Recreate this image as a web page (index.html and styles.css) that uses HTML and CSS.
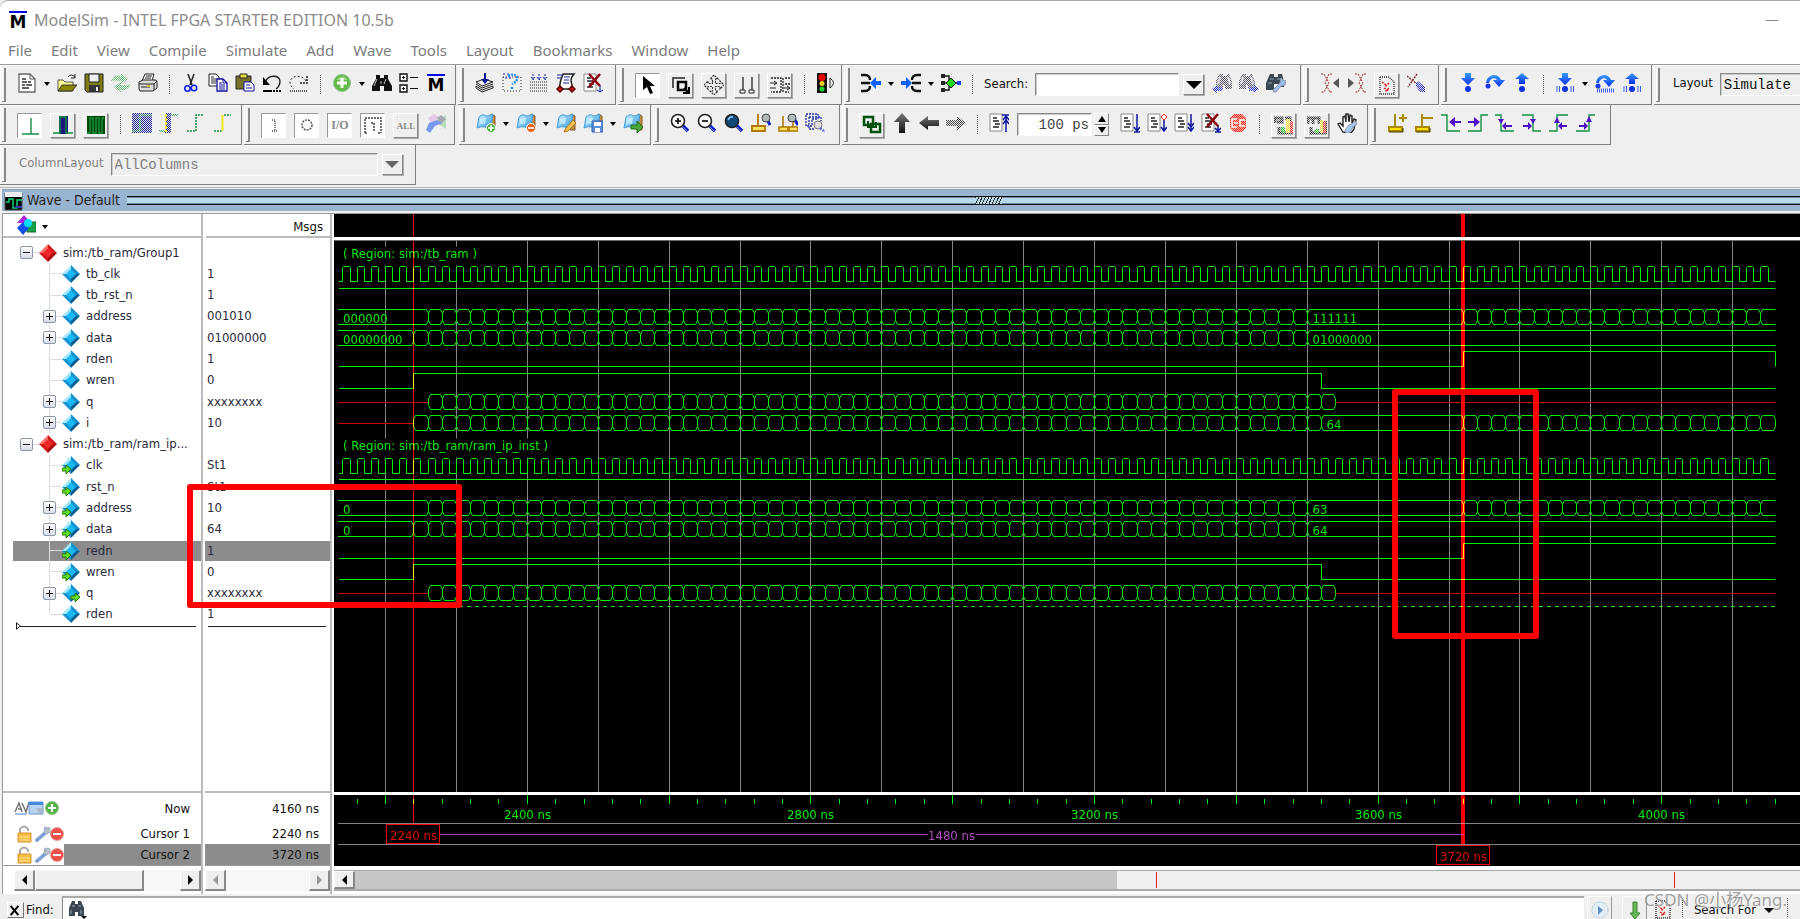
FILE: index.html
```html
<!DOCTYPE html>
<html lang="en">
<head>
<meta charset="utf-8">
<title>ModelSim - INTEL FPGA STARTER EDITION 10.5b</title>
<link rel="stylesheet" href="styles.css">
</head>
<body>
<svg class="defs" aria-hidden="true">
  <defs>
    <pattern id="dither" width="2" height="2" patternUnits="userSpaceOnUse"><rect width="1" height="1" fill="#efefef"/><rect x="1" y="1" width="1" height="1" fill="#efefef"/></pattern>
    <linearGradient id="sky" x1="0" y1="0" x2="1" y2="1"><stop offset="0" stop-color="#c8f0ff"/><stop offset=".5" stop-color="#7cc4ee"/><stop offset="1" stop-color="#3a98d8"/></linearGradient>
    <linearGradient id="dark" x1="0" y1="0" x2="0" y2="1"><stop offset="0" stop-color="#777"/><stop offset="1" stop-color="#111"/></linearGradient>
    <linearGradient id="blue" x1="0" y1="0" x2="0" y2="1"><stop offset="0" stop-color="#3a9cff"/><stop offset="1" stop-color="#0a30e8"/></linearGradient>
  </defs>
</svg>
<div class="app">
  <header class="titlebar">
    <span class="logo" data-icon="logo"></span>
    <h1>ModelSim - INTEL FPGA STARTER EDITION 10.5b</h1>
    <button class="minimize" aria-label="Minimize"></button>
  </header>
  <nav class="menubar">
    <button>File</button><button>Edit</button><button>View</button><button>Compile</button><button>Simulate</button><button>Add</button><button>Wave</button><button>Tools</button><button>Layout</button><button>Bookmarks</button><button>Window</button><button>Help</button>
  </nav>
  <div class="toolrow">
    <div class="toolbar w-file"><i class="grip"></i>
      <button class="t" data-icon="new" aria-label="New"></button><button class="dd" aria-label="New options"></button>
      <button class="t" data-icon="open" aria-label="Open"></button><button class="t" data-icon="save" aria-label="Save"></button><button class="t" data-icon="reload" aria-label="Reload"></button><button class="t" data-icon="print" aria-label="Print"></button><i class="sep"></i>
      <button class="t" data-icon="cut" aria-label="Cut"></button><button class="t" data-icon="copy" aria-label="Copy"></button><button class="t" data-icon="paste" aria-label="Paste"></button><button class="t" data-icon="undo" aria-label="Undo"></button><button class="t" data-icon="redo" aria-label="Redo"></button><i class="sep"></i>
      <button class="t" data-icon="add" aria-label="Add"></button><button class="dd" aria-label="Add options"></button><button class="t" data-icon="find" aria-label="Find"></button><button class="t" data-icon="tree" aria-label="Collapse"></button><button class="t" data-icon="logo" aria-label="ModelSim"></button>
    </div>
    <div class="toolbar w-compile"><i class="grip"></i>
      <button class="t" data-icon="compile" aria-label="Compile"></button><button class="t" data-icon="compileq" aria-label="Compile out of date"></button><button class="t" data-icon="compileall" aria-label="Compile all"></button><button class="t" data-icon="simulate" aria-label="Simulate"></button><button class="t" data-icon="break" aria-label="Break"></button>
    </div>
    <div class="toolbar w-mode"><i class="grip"></i>
      <button class="t box on" data-icon="pointer" aria-label="Select mode"></button><button class="t box" data-icon="zoommode" aria-label="Zoom mode"></button><button class="t box" data-icon="pan" aria-label="Pan mode"></button><button class="t box" data-icon="twocursor" aria-label="Two cursor mode"></button><button class="t box" data-icon="editmode" aria-label="Edit mode"></button><i class="sep"></i>
      <button class="t" data-icon="traffic" aria-label="Stop drawing"></button>
    </div>
    <div class="toolbar w-search"><i class="grip"></i>
      <button class="t" data-icon="drivers" aria-label="Drivers"></button><button class="dd" aria-label="Drivers options"></button><button class="t" data-icon="readers" aria-label="Readers"></button><button class="dd" aria-label="Readers options"></button><button class="t" data-icon="net" aria-label="Net"></button><i class="sep"></i>
      <label class="lbl" for="search">Search:</label><input id="search" class="field search" type="text"><button class="drop" aria-label="Search history"></button>
      <button class="t" data-icon="findprev" aria-label="Search backward"></button><button class="t" data-icon="findnext" aria-label="Search forward"></button><button class="t" data-icon="findopt" aria-label="Search options"></button>
    </div>
    <div class="toolbar w-x"><i class="grip"></i>
      <button class="t" data-icon="xprev" aria-label="Previous X"></button><button class="t" data-icon="xnext" aria-label="Next X"></button><button class="t box" data-icon="xdoc" aria-label="X report"></button><button class="t" data-icon="xopt" aria-label="X options"></button>
    </div>
    <div class="toolbar w-step"><i class="grip"></i>
      <button class="t" data-icon="into" aria-label="Step into"></button><button class="t" data-icon="over" aria-label="Step over"></button><button class="t" data-icon="out" aria-label="Step out"></button><i class="sep"></i>
      <button class="t" data-icon="intoc" aria-label="Step into current"></button><button class="dd" aria-label="Step options"></button><button class="t" data-icon="overc" aria-label="Step over current"></button><button class="t" data-icon="outc" aria-label="Step out current"></button>
    </div>
    <div class="toolbar w-layout"><i class="grip"></i>
      <label class="lbl" for="layout">Layout</label><input id="layout" class="field mono flat" type="text" value="Simulate">
    </div>
  </div>
  <div class="toolrow">
    <div class="toolbar w-shape"><i class="grip"></i>
      <button class="t box on" data-icon="w1" aria-label="Event"></button><button class="t box" data-icon="w2" aria-label="Pulse"></button><button class="t box" data-icon="w3" aria-label="Clock"></button><i class="sep"></i>
      <button class="t" data-icon="w4" aria-label="Region"></button><button class="t" data-icon="w5" aria-label="Edge region"></button><button class="t" data-icon="w6" aria-label="Edge"></button><button class="t" data-icon="w7" aria-label="Marked edge"></button>
    </div>
    <div class="toolbar w-io"><i class="grip"></i>
      <button class="t box on" data-icon="fi" aria-label="Inputs"></button><button class="t box on" data-icon="fo" aria-label="Outputs"></button><button class="t box on" data-icon="fio" aria-label="Inouts"></button><button class="t box on" data-icon="fint" aria-label="Internal"></button><button class="t box" data-icon="fall" aria-label="All"></button><button class="t" data-icon="fopt" aria-label="Filter options"></button>
    </div>
    <div class="toolbar w-mark"><i class="grip"></i>
      <button class="t" data-icon="bkadd" aria-label="Add bookmark"></button><button class="dd" aria-label="Add bookmark options"></button><button class="t" data-icon="bkdel" aria-label="Delete bookmark"></button><button class="dd" aria-label="Delete bookmark options"></button><button class="t" data-icon="bkedit" aria-label="Edit bookmark"></button><button class="t" data-icon="bksave" aria-label="Save bookmark"></button><button class="dd" aria-label="Save bookmark options"></button><button class="t" data-icon="bkgo" aria-label="Go to bookmark"></button>
    </div>
    <div class="toolbar w-zoom"><i class="grip"></i>
      <button class="t" data-icon="zin" aria-label="Zoom in"></button><button class="t" data-icon="zout" aria-label="Zoom out"></button><button class="t" data-icon="zfull" aria-label="Zoom full"></button><button class="t" data-icon="zcur" aria-label="Zoom on cursor"></button><button class="t" data-icon="zcurs" aria-label="Zoom between cursors"></button><button class="t" data-icon="zsel" aria-label="Zoom other window"></button>
    </div>
    <div class="toolbar w-run"><i class="grip"></i>
      <button class="t box" data-icon="link" aria-label="Environment"></button><button class="t" data-icon="up" aria-label="Up"></button><button class="t" data-icon="back" aria-label="Back"></button><button class="t" data-icon="fwd" aria-label="Forward"></button><i class="sep"></i>
      <button class="t" data-icon="restart" aria-label="Restart"></button>
      <span class="spin"><input class="field mono" type="text" value="100 ps" aria-label="Run length"><span class="spinbtns"><button class="su" aria-label="Increase"></button><button class="sd" aria-label="Decrease"></button></span></span>
      <button class="t" data-icon="run" aria-label="Run"></button><button class="t" data-icon="cont" aria-label="Continue run"></button><button class="t" data-icon="runall" aria-label="Run all"></button><button class="t" data-icon="brk" aria-label="Break run"></button><button class="t" data-icon="stop" aria-label="Stop"></button><i class="sep"></i>
      <button class="t box" data-icon="perf" aria-label="Performance profiling"></button><button class="t box" data-icon="mem" aria-label="Memory profiling"></button><button class="t" data-icon="hand" aria-label="Profile options"></button>
    </div>
    <div class="toolbar w-cursor"><i class="grip"></i>
      <button class="t" data-icon="cadd" aria-label="Insert cursor"></button><button class="t" data-icon="cdel" aria-label="Delete cursor"></button><button class="t" data-icon="e1" aria-label="Previous transition"></button><button class="t" data-icon="e2" aria-label="Next transition"></button><button class="t" data-icon="e3" aria-label="Previous falling edge"></button><button class="t" data-icon="e4" aria-label="Next falling edge"></button><button class="t" data-icon="e5" aria-label="Previous rising edge"></button><button class="t" data-icon="e6" aria-label="Next rising edge"></button>
    </div>
  </div>
  <div class="toolrow">
    <div class="toolbar w-cols"><i class="grip"></i>
      <label class="lbl off" for="cols">ColumnLayout</label><input id="cols" class="field mono flat off" type="text" value="AllColumns"><button class="drop off" aria-label="Choose columns"></button>
    </div>
  </div>

  <main class="window">
    <div class="caption"><span class="capicon" data-icon="wave"></span><h2>Wave - Default</h2><span class="rails"><i></i></span></div>
    <div class="panes">
      <section class="pane names">
        <div class="head"><button class="objects" data-icon="objects" aria-label="Objects"></button><button class="dd" aria-label="Object options"></button></div>
        <ul class="list" id="names"></ul>
        <div class="fill"><i class="endmark"></i></div>
        <div class="foot">
          <div class="now"><span class="ticons" data-icon="nowicons"></span><b>Now</b></div>
          <div><span class="ticons" data-icon="curicons"></span><b>Cursor 1</b></div>
          <div class="sel"><span class="ticons" data-icon="curicons"></span><b>Cursor 2</b></div>
        </div>
        <div class="scroll"><button class="sl" aria-label="Scroll left"></button><i class="thumb"></i><i class="trough"></i><button class="sr" aria-label="Scroll right"></button></div>
      </section>
      <section class="pane values">
        <div class="head">Msgs</div>
        <ul class="list" id="values"></ul>
        <div class="fill"><i class="endline"></i></div>
        <div class="foot"><div class="now"><b>4160 ns</b></div><div><b>2240 ns</b></div><div class="sel"><b>3720 ns</b></div></div>
        <div class="scroll dis"><button class="sl" aria-label="Scroll left"></button><i class="trough"></i><button class="sr" aria-label="Scroll right"></button></div>
      </section>
      <section class="pane waves">
        <div class="wtop"><svg id="wtop"></svg></div>
        <div class="wplot"><svg id="wplot"></svg></div>
        <div class="wruler"><svg id="wruler"></svg></div>
        <div class="scroll wide"><button class="sl" aria-label="Scroll left"></button><i class="before"></i><i class="view"><i class="m1"></i><i class="m2"></i></i></div>
      </section>
      <i class="note note-values"></i>
      <i class="note note-edge"></i>
    </div>
    <footer class="findbar">
      <button class="close" data-icon="close" aria-label="Close find bar"></button><label class="lbl" for="find">Find:</label>
      <span class="findbox"><span data-icon="findsm"></span><input id="find" type="text"></span>
      <button class="fb" data-icon="play" aria-label="Find next"></button><button class="fb second" data-icon="down" aria-label="Direction"></button><button class="fb plain" data-icon="xdoc" aria-label="Match list"></button><i class="sep"></i>
      <button class="for">Search For <i></i></button><i class="sep"></i>
      <span class="mark">CSDN @小杨Yang.</span>
    </footer>
  </main>
</div>
<script src="app.js"></script>
</body>
</html>
```
FILE: styles.css
```css
* { box-sizing: border-box; }
body { margin: 0; background: #efefef; color: #111; font: 13px "DejaVu Sans Condensed", "Noto Sans", "Noto Sans CJK SC", sans-serif; }
button { margin: 0; padding: 0; border: 0; background: none; color: inherit; font: inherit; }
input { margin: 0; outline: 0; color: inherit; font: inherit; min-width: 0; }
h1, h2, ul { margin: 0; padding: 0; font-weight: normal; list-style: none; }
i { display: block; }
svg { display: block; }
.defs { position: absolute; width: 0; height: 0; }
.app { display: flex; flex-direction: column; height: 100vh; overflow: hidden; }

.titlebar { display: flex; align-items: center; height: 37px; padding: 2px 22px 0 8px; background: #fff; border-top: 1px solid #a8a8a8; border-top-left-radius: 8px; color: #8c8c8c; }
.titlebar h1 { flex: 1; margin-left: 6px; font: 16px "Noto Sans", sans-serif; }
.logo { width: 20px; height: 20px; }
.minimize { width: 12px; height: 1px; background: #888; }
.menubar { display: flex; gap: 19px; height: 28px; padding: 0 8px 0; background: #fff; border-bottom: 1px solid #999; color: #7c7c7c; font: 15px "Noto Sans", sans-serif; }
.menubar button { height: 26px; }

.toolrow { display: flex; gap: 2px; height: 40px; }
.toolbar { display: flex; flex: none; align-items: center; height: 40px; border: solid #808080; border-width: 0 1px 1px 0; box-shadow: inset 1px 1px #fff; overflow: hidden; }
.grip { flex: none; width: 4px; height: 34px; margin: 0 7px 0 2px; border: solid #888; border-width: 0 2px 1px 0; box-shadow: inset 1px 0 #fff; }
.w-file { width: 456px; }
.w-compile { width: 158px; }
.w-mode { width: 224px; }
.w-search { width: 457px; }
.w-x { width: 136px; }
.w-step { width: 211px; }
.w-layout { flex: 1 0 148px; }
.w-shape { width: 242px; }
.w-io { width: 211px; margin-right: 2px; }
.w-mark { width: 192px; }
.w-zoom { width: 187px; }
.w-run { width: 526px; }
.w-cursor { width: 241px; }
.w-cols { width: 416px; }
.t { display: flex; flex: none; align-items: center; justify-content: center; width: 27px; height: 20px; margin-bottom: 3px; }
.t.box { width: 25px; height: 25px; margin: 1px 4px 0; border: 1px solid #fff; border-right-color: #8a8a8a; border-bottom-color: #8a8a8a; box-shadow: 1px 1px #aaa; }
.t.box.on { background: #fff; border-color: #999 #fff #fff #999; box-shadow: none; }
.dd { flex: none; width: 13px; height: 6px; display: flex; justify-content: center; }
.dd::before { content: ""; border: solid transparent; border-width: 4px 3px 0; border-top-color: #000; }
.sep { flex: none; width: 16px; height: 20px; background: repeating-linear-gradient(#555 0 1px, transparent 1px 2px) center / 1px 20px no-repeat; }
.lbl { flex: none; margin: 0 7px 2px 4px; }
.field { height: 23px; padding: 0 3px; border: 1px solid #fff; border-top-color: #888; border-left-color: #888; background: #fff; box-shadow: inset 1px 1px #ccc; }
.search { width: 144px; }
.mono { font: 14px "Liberation Mono", monospace; }
.flat { background: #efefef; }
.drop { flex: none; display: flex; justify-content: center; align-items: center; width: 21px; height: 21px; margin: 0 4px; border: 1px solid #fff; border-right-color: #888; border-bottom-color: #888; box-shadow: 1px 1px #aaa; }
.drop::before { content: ""; border: solid transparent; border-width: 8px 8px 0; border-top-color: #000; }
.drop.off::before { border-width: 7px 7px 0; border-top-color: #666; }
.off { color: #808080; }
.w-layout .lbl, .w-cols .lbl { margin-left: 6px; margin-bottom: 5px; }
.w-layout .field { flex: 1; }
.w-cols .field { width: 267px; }
.spin { display: flex; gap: 2px; width: 92px; margin: 0 7px 0 5px; }
.spin .field { width: 75px; text-align: right; color: #444; padding-right: 2px; }
.spinbtns { display: grid; width: 15px; }
.spinbtns button { display: flex; align-items: center; justify-content: center; border: 1px solid #fff; border-right-color: #888; border-bottom-color: #888; }
.su::before, .sd::before { content: ""; border: solid transparent; border-width: 0 4px 6px; border-bottom-color: #000; }
.sd::before { border-width: 6px 4px 0; border-top-color: #000; }

.window { display: flex; flex: 1; flex-direction: column; min-height: 0; margin-top: 2px; border-top: 1px solid #b4b4b4; padding: 1px 0 0 2px; }
.caption { display: flex; flex: none; align-items: center; height: 22px; padding-left: 2px; background: #99b4d1; border-top: 1px solid #8ba6c4; }
.capicon { width: 19px; height: 19px; }
.caption h2 { margin: 0 7px 2px 4px; font-size: 14px; color: #222; }
.rails { display: flex; flex: 1; justify-content: center; height: 9px; background: #b7d9ea; border: solid #111; border-width: 1px 0; box-shadow: inset 0 1px #6f8aa6, inset 0 -1px #6f8aa6; }
.rails i { width: 27px; height: 7px; margin-left: 50px; background: repeating-linear-gradient(115deg, #333 0 1px, #b7d9ea 1px 3px); }
.panes { position: relative; display: flex; flex: 1; min-height: 0; margin-top: 2px; border-left: 1px solid #999; border-top: 1px solid #999; background: #fff; }
.pane { display: flex; flex-direction: column; min-width: 0; }
.names { width: 200px; border-right: 2px solid #bbb; }
.values { width: 127px; margin-left: 2px; border-right: 2px solid #bbb; }
.waves { flex: 1; margin-left: 2px; }
.head { display: flex; flex: none; align-items: center; height: 24px; border-bottom: 2px solid #bbb; }
.values .head { justify-content: flex-end; padding: 2px 7px 0 0; margin-left: 1px; }
.names .head { padding-left: 13px; }
.objects { width: 20px; height: 20px; }
.names .dd { margin: 6px 0 0 2px; }
.list { display: grid; flex: none; grid-template-rows: repeat(18, 1fr); height: 387px; padding-top: 4px; color: #2a2a3a; }
.list li { position: relative; display: flex; align-items: center; min-height: 0; white-space: pre; line-height: 18px; }
.list .sel::before { content: ""; position: absolute; inset: 1px 0 0 10px; background: #8c8c8c; }
.values .sel::before { left: 0; }
.list li > * { position: relative; }
.names li { padding-left: 17px; }
.names li.child { padding-left: 40px; }
.names li.child::after { content: ""; position: absolute; left: 46px; top: 0; bottom: 0; width: 1px; background: #ddd; z-index: 0; }
.names li.last::after { bottom: 50%; }
.names li > * { z-index: 1; }
.exp { flex: none; display: flex; align-items: center; justify-content: center; width: 13px; height: 13px; border: 1px solid #8b97ab; border-radius: 2px; background: linear-gradient(#fff, #d8dce4); }
.exp::before { content: ""; width: 7px; height: 7px; background: linear-gradient(#111, #111) center / 7px 1px no-repeat; }
.exp.plus::before { background: linear-gradient(#111, #111) center / 7px 1px no-repeat, linear-gradient(#111, #111) center / 1px 7px no-repeat; }
.exp.none { visibility: hidden; }
.tw { flex: none; width: 6px; height: 1px; background: #ddd; }
.none + .tw { width: 12px; margin-left: -6px; }
.dia { flex: none; width: 18px; height: 18px; margin-right: 6px; }
.values li { padding-left: 2px; }
.fill { flex: 1; min-height: 0; }
.endmark { position: relative; width: 180px; height: 1px; margin: 1px 0 0 13px; background: #222; }
.endmark::before { content: ""; position: absolute; left: 0; top: -4px; border: solid transparent; border-width: 4px 0 4px 5px; border-left-color: #222; }
.endmark::after { content: ""; position: absolute; left: 1px; top: -2px; border: solid transparent; border-width: 2px 0 2px 3px; border-left-color: #fff; }
.endline { height: 1px; margin: 1px 4px 0 3px; background: #222; }
.foot { display: grid; flex: none; grid-template-rows: 30px 21px 21px; border-top: 2px solid #bbb; border-bottom: 1px solid #999; text-align: right; }
.foot div { display: flex; align-items: center; justify-content: space-between; padding: 0 11px 0 11px; }
.foot b { flex: 1; font-weight: normal; }
.foot .sel { background: linear-gradient(#8c8c8c, #8c8c8c) right / 100% 100% no-repeat; }
.names .foot .sel { background-size: 137px 100%; }
.ticons { width: 50px; height: 20px; }
.scroll { display: flex; flex: none; height: 21px; margin: 4px 0 3px; }
.names .scroll { margin-left: 11px; }
.sl, .sr { display: flex; flex: none; align-items: center; justify-content: center; width: 21px; border: 1px solid #fff; border-right: 2px solid #888; border-bottom: 2px solid #888; background: #efefef; }
.sl::before { content: ""; border: solid transparent; border-width: 5px 5px 5px 0; border-right-color: #000; }
.sr::before { content: ""; border: solid transparent; border-width: 5px 0 5px 5px; border-left-color: #000; }
.dis .sl::before { border-right-color: #999; }
.dis .sr::before { border-left-color: #999; }
.thumb { width: 109px; border: 1px solid #fff; border-right: 2px solid #888; border-bottom: 2px solid #888; background: #efefef; }
.trough { flex: 1; background: #f7f7f7; }
.wide { border: solid #aaa; border-width: 1px 0 2px; background: #c6c6c6; }
.before { flex: none; width: 52%; }
.view { display: flex; flex: 1; justify-content: space-between; padding: 1px 125px 1px 39px; background: #efefef; }
.m1, .m2 { width: 1px; background: #e02020; }
.wtop, .wplot, .wruler { overflow: hidden; background: #000; }
.wtop { flex: none; height: 23px; }
.wplot { flex: 1; min-height: 0; margin: 3px 0; border-top: 1px solid #666; }
.wruler { flex: none; height: 71px; }
.waves svg { width: 100%; height: 100%; font: 13px "DejaVu Sans Condensed", "Noto Sans", sans-serif; isolation: isolate; }
.g { fill: none; stroke: #00ee00; }
.x { fill: none; stroke: #c80000; }
.grid { stroke: #848484; }
.gt { fill: #00f000; }
.rt { fill: #e80000; }
.cur { fill: #f00; mix-blend-mode: screen; }

.note { position: absolute; border: 6px solid #f00; border-radius: 3px; z-index: 3; }
.note-values { left: 184px; top: 270px; width: 275px; height: 124px; }
.note-edge { left: 1389px; top: 175px; width: 147px; height: 250px; }

.findbar { position: relative; display: flex; flex: none; align-items: flex-start; height: 25px; padding: 2px 5px 0 5px; background: #efefef; }
.close { width: 17px; height: 16px; margin-top: 6px; border: 1px solid #fff; border-right-color: #777; border-bottom-color: #777; }
.findbar .lbl { margin: 6px 8px 0 2px; line-height: 16px; }
.findbox { display: flex; flex: 1; height: 23px; padding: 2px 0 0 4px; border-left: 1px solid #888; border-top: 2px solid #aaa; background: #fff; }
.findbox input { flex: 1; border: 0; background: none; }
.fb { width: 25px; height: 23px; margin-left: 3px; padding: 1px 2px 0; border: solid #fff; border-width: 1px 1px 0; border-right: 1px solid #999; }
.fb.second { margin-left: 10px; }
.fb.plain { border-color: transparent; }
.findbar .sep { margin-top: 2px; }
.for { display: flex; align-items: center; gap: 8px; margin: 6px 5px 0 3px; line-height: 16px; }
.for i { border: solid transparent; border-width: 5px 5px 0; border-top-color: #000; }
.mark { position: absolute; right: 13px; top: -7px; color: rgba(130, 130, 130, .75); font: 17px/26px "Noto Sans", "Noto Sans CJK SC", sans-serif; text-shadow: 1px 1px rgba(255, 255, 255, .6); }
```
FILE: app.js
```js
const flag = '<path d="M15 1l4 2v14h-5l-3-3z" fill="#c08a40" stroke="#8a5c20"/><path d="M3 4q4-4 7-1 3 0 7-2l-2 13q-3 2-6 0-4-1-8 1z" fill="url(#sky)" stroke="#48a0dc"/><path d="M4 6q3-3 6-1l-1 6q-3-1-6 1z" fill="#d4f4ff" opacity=".7"/>';
const lens = (inner, fill = '#fff') => `<path d="M12 12l6 6" stroke="#1020d0" stroke-width="3.500"/><path d="M12 13l5 5" stroke="#88a" stroke-width="1"/><circle cx="8" cy="8" r="6.500" fill="${fill}" stroke="#222" stroke-width="1.6"/>${inner}`;
const page = '<path d="M1 1h12v17H1z" fill="#fff" stroke="#888"/><path d="M4 5h4M4 8h6M6 11h5M4 14h6" stroke="#222" stroke-width="1.5"/>';
const bino = (c) => `<path d="M4 2h4v3h4V2h4v4l4 7v5h-8v-5H8v5H0v-5l4-7z" fill="${c}"/><path d="M5 6l-3 7M14 6l-2 5M9 8v3" stroke="#bbb"/>`;
const layers = '<path d="M1 13l6 4 11-4v2L7 19l-6-4zM1 9l6 4 11-4M1 11l6 4 11-4M1 9l8-3 9 3" fill="none" stroke="#222"/>';
const X = '<path d="M6 1l11 12M17 1L6 14" stroke="#8c0010" stroke-width="2.5"/>';
const stand = (x) => `<path d="M${x + 4} 3v11M${x} 14h9v4h-9z" fill="#ffe060" stroke="#b07800" stroke-width="1.6"/>`;
const down = '<path d="M7 0h6v5h4l-7 7-7-7h4z" fill="url(#blue)"/>';
const upA = '<path d="M7 11h6V6h4l-7-6-7 6h4z" fill="url(#blue)"/>';
const over = '<path d="M1 10C2 1 13-1 16 7h4l-6 7-6-7h4C10 4 5 5 4 10z" fill="url(#blue)"/><circle cx="3" cy="13" r="2.5" fill="#1838e0"/>';
const ticks = '<path d="M2 13v6M4.500 13v6M16 13v6M18.500 13v6" stroke="#4060f0"/>';
const dot = '<circle cx="10" cy="16" r="3" fill="#1030e0"/>';
const frame = (p) => `<path d="${p}" fill="none" stroke="#189048" stroke-width="1.4"/>`;
const va = (p) => `<path d="${p}" fill="#5010c8"/>`;
const txt = (s, x, size) => `<text x="${x}" y="14" text-anchor="middle" font-family="Liberation Serif" font-weight="bold" font-size="${size}" fill="#888">${s}</text>`;

const icons = {
  logo: '<path d="M1 1h18v2H1z" fill="#0000f0"/><text x="10" y="18" text-anchor="middle" font-family="DejaVu Sans" font-weight="bold" font-size="17" fill="#000">M</text>',
  new: '<path d="M2 1h11l5 5v13H2z" fill="#fff" stroke="#666" stroke-width="1.3"/><path d="M13 1v5h5" fill="none" stroke="#555"/><path d="M5 6h4M5 9h5M11 9h3M5 12h3M9 12h6M5 15h7" stroke="#333" stroke-width="1.3"/>',
  open: '<path d="M1 7h5l2 2h8v9H1z" fill="#ffff90" stroke="#555"/><path d="M1 18l4-6h15l-5 6z" fill="#8a8400" stroke="#333"/><path d="M11 4q3-4 7 0M18 1v4h-4" fill="none" stroke="#222"/>',
  save: '<path d="M1 1h18v18H3l-2-2z" fill="#807c10" stroke="#222"/><path d="M5 1h10v8H5z" fill="#eee" stroke="#222"/><path d="M5 12h11v7H5z" fill="#333"/><path d="M12 14h2v4h-2z" fill="#fff"/>',
  reload: '<path d="M0 8q4-7 10-5V0l7 6-7 5V8Q5 7 0 8zM20 11q-3 7-10 6v3l-7-6 7-5v3q6 1 10-1z" fill="#68b878"/><rect width="20" height="20" fill="url(#dither)"/>',
  print: '<path d="M7 1h9l-2 7H4z" fill="#fff" stroke="#222"/><path d="M1 9l4-2h13l1 2v6l-4 3H2l-1-2z" fill="#ddd" stroke="#222"/><path d="M1 11h15l3-3M16 11v6M8 3h6M7 5h6M3 14h9" fill="none" stroke="#222"/><path d="M9 13h3" stroke="#d0c020" stroke-width="2"/>',
  cut: '<path d="M7 1l4 11M13 1L9 12" stroke="#222" stroke-width="1.5"/><circle cx="6.500" cy="15.500" r="2.700" fill="none" stroke="#1020f0" stroke-width="1.6"/><circle cx="13" cy="15" r="2.700" fill="none" stroke="#1020f0" stroke-width="1.6"/>',
  copy: '<path d="M1 1h7l3 3v9H1z" fill="#fff" stroke="#222"/><path d="M3 4h3M3 6h6M3 8h6M3 10h5" stroke="#333"/><path d="M9 6h6l4 4v8H9z" fill="#fff" stroke="#1010a0" stroke-width="1.3"/><path d="M15 6v4h4M11 10h3M11 12h6M11 14h6M11 16h6" fill="none" stroke="#1010a0"/>',
  paste: '<path d="M1 3h15v13H1z" fill="#76702a" stroke="#222"/><path d="M5 1h7v4H5z" fill="#e8e040" stroke="#222"/><path d="M9 9h7l3 3v6H9z" fill="#fff" stroke="#1010a0"/><path d="M11 12h4M11 15h6" stroke="#1010a0"/>',
  undo: '<path d="M3 9C7 1 17 2 18 8q0 5-4 8" fill="none" stroke="#222" stroke-width="1.4"/><path d="M1 4v8h7z" fill="#000"/><path d="M1 18h9" stroke="#000" stroke-width="2"/><path d="M11 18h8" stroke="#000" stroke-width="2" stroke-dasharray="2 1"/>',
  redo: '<path d="M17 8C13 1 2 2 1 9q0 4 4 7" fill="none" stroke="#222" stroke-dasharray="2 2"/><path d="M18 3v7h-7" fill="none" stroke="#222" stroke-width="1.5" stroke-dasharray="2 1"/><path d="M1 18h18" stroke="#222" stroke-width="1.5" stroke-dasharray="1 1"/>',
  add: '<circle cx="10" cy="10" r="8.500" fill="#62b848" stroke="#8bc888"/><path d="M4 7q6-7 12 0z" fill="#9cda84"/><path d="M10 5v10M5 10h10" stroke="#fff" stroke-width="3"/>',
  find: bino('#111'),
  tree: '<path d="M1 1h7v7H1zM1 12h7v7H1z" fill="#fff" stroke="#111" stroke-width="1.4"/><path d="M3 4.500h3M4.500 3v3M3 15.500h3M4.500 14v3M11 4.500h8M11 15.500h8" stroke="#111"/>',
  compile: layers + '<path d="M9 0h2v6h3l-4 5-4-5h3z" fill="#101898"/>',
  compileq: '<path d="M1 4h18v14H1z" fill="none" stroke="#222" stroke-dasharray="1 2"/><path d="M1 1h8M3 5h8" stroke="#1020a0" stroke-dasharray="2 2"/><path d="M6 3q6-3 9 1 1 4-5 7M10 14v2" fill="none" stroke="#2090f0" stroke-width="2.500" stroke-dasharray="2 1"/>',
  compileall: '<path d="M1 9h18M1 12h18M1 15h18M1 18h18" stroke="#222" stroke-dasharray="1 1"/><path d="M4 1v5M10 1v5M16 1v5M2 4l2 3 2-3M8 4l2 3 2-3M14 4l2 3 2-3" fill="none" stroke="#1020a0" stroke-dasharray="2 1"/>',
  simulate: '<path d="M7 1h11q-3 3-3 7l2 8H3q1-8 4-15z" fill="#fff" stroke="#222" stroke-width="1.5"/><path d="M1 2h5M1 5h4M8 4h6M8 7h5M7 10h6" stroke="#1828a0"/><path d="M4 13l3 3-3 3-3-3zM16 13l3 3-3 3-3-3z" fill="#c81020" stroke="#600" stroke-width="1.500"/>',
  break: page + '<path d="M17 12v7M14 17l3 2 3-2" stroke="#1020a0" fill="none"/>' + X,
  pointer: '<path d="M5 1v14l4-3 3 7 3-1-3-7h5z" fill="#000"/>',
  zoommode: '<path d="M2 13V3h12" fill="none" stroke="#555" stroke-width="2"/><path d="M7 7h8v8H7z" fill="none" stroke="#000" stroke-width="2.500"/><path d="M13 13l5 5M18 12v6h-6" stroke="#000" stroke-width="2" fill="none"/>',
  pan: '<path d="M8.500 7V4H6l4-4 4 4h-2.500v4.500H16V6l4 4-4 4v-2.500h-4.500V16H14l-4 4-4-4h2.500v-4.500H4V14l-4-4 4-4v2.500h4.500z" stroke="#333" fill="none" stroke-width="1.200" stroke-dasharray="2 1"/>',
  twocursor: '<path d="M6 2v14M15 2v14" stroke="#333" stroke-width="1.4"/><path d="M3 15h5v3H3zM12 15h5v3h-5z" fill="#fff" stroke="#222"/>',
  editmode: '<path d="M1 3h10v14H1M13 3v14M15 3h5M15 17h4M15 9h5" stroke="#222" stroke-width="1.3" stroke-dasharray="2 1" fill="none"/><path d="M0 8h6M0 13h6M4 6l3 2-3 2M14 13h5M17 11l3 2-3 2" fill="none" stroke="#222"/>',
  traffic: '<path d="M1 0h10v20H1z" fill="#111"/><circle cx="6" cy="4.500" r="3.500" fill="#f00000"/><circle cx="6" cy="10.500" r="2.500" fill="#f0d020"/><circle cx="6" cy="16" r="2.500" fill="#20d030"/><path d="M14 5q7 5 0 10z" fill="#fff" stroke="#222"/>',
  drivers: '<path d="M0 2h4q5 0 5 5M0 10h9M0 18h4q5 0 5-5" fill="none" stroke="#111" stroke-width="2.400"/><path d="M9 10l6-6v4h5v4h-5v4z" fill="#1060ff"/>',
  readers: '<path d="M20 2h-4q-5 0-5 5M20 10h-9M20 18h-4q-5 0-5-5" fill="none" stroke="#111" stroke-width="2.400"/><path d="M11 10L5 4v4H0v4h5v4z" fill="#1060ff"/>',
  net: '<path d="M2 3h6v14H2M1 10h9M10 10h7" fill="none" stroke="#111" stroke-width="1.400"/><path d="M0 1h4v4H0zM0 8h4v4H0zM0 15h4v4H0z" fill="#222"/><path d="M10 5l5 5-5 5-5-5z" fill="#20d818" stroke="#111"/><path d="M16 8h4v4h-4z" fill="#1840ff"/>',
  findprev: '<path d="M7 1h4v2h4V1h2l3 8v7h-7v-4h-2v4H4V8z" fill="#556"/><path d="M8 4l-2 7M16 4l2 7" stroke="#ccd" stroke-width="2"/><path d="M0 16l5-4v2h5v4H5v2z" fill="#2030e8"/><rect width="20" height="20" fill="url(#dither)"/>',
  findnext: '<path d="M3 1h4v2h4V1h2l3 8v7H9v-4H7v4H0V8z" fill="#556"/><path d="M4 4l-2 7M12 4l2 7" stroke="#ccd" stroke-width="2"/><path d="M20 16l-5-4v2h-5v4h5v2z" fill="#2030e8"/><rect width="20" height="20" fill="url(#dither)"/>',
  findopt: '<path d="M4 1h4v3h4V1h4l2 8v5h-6v-3H8v6H0v-7z" fill="#3a4854"/><path d="M4 6h4M11 6h4M2 10h4" stroke="#90a0b0"/><path d="M7 17l7-7 1-5 3 3 2-1-1 5-4 1-5 6q-3 1-3-2z" fill="#90bcf0" stroke="#99a"/>',
  xprev: '<path d="M1 1h3l5 9-5 9H1M12 1H9M12 19H9M9 1L5 10l5 9" fill="none" stroke="#a03030" stroke-dasharray="2 1"/><path d="M19 5v10l-6-5z" fill="#555"/>',
  xnext: '<path d="M8 1h3l5 9-5 9H8M19 1h-3M19 19h-3M16 1l-4 9 5 9" fill="none" stroke="#a03030" stroke-dasharray="2 1"/><path d="M1 5v10l6-5z" fill="#555"/>',
  xdoc: '<path d="M3 2h9l5 5v12H3z" fill="none" stroke="#333" stroke-width="1.4" stroke-dasharray="1 1"/><path d="M5 7l4 3M12 8l-4 4M7 13l5 3M12 13l-4 4" stroke="#e02020" stroke-width="1.400" stroke-dasharray="2 1"/>',
  xopt: '<path d="M0 3l15 12M10 1L1 14" stroke="#803030" stroke-dasharray="2 1" stroke-width="1.500"/><path d="M9 10q3-3 4 0l5 4v5h-5l-4-6z" fill="#2028c0"/><rect x="8" y="8" width="12" height="12" fill="url(#dither)"/>',
  into: down + dot, over, out: upA + dot,
  intoc: down + dot + ticks, overc: over + '<path d="M2 17.500h17" stroke="#4060f0" stroke-width="4" stroke-dasharray="1 1"/>', outc: upA + dot + ticks,
  w1: frame('M2 19h17M11 3v16'),
  w2: '<path d="M6 1h9v18H6z" fill="#181878"/>' + frame('M0 18h7V2h6v16h7'),
  w3: '<path d="M1 1h18v18H1z" fill="#004800"/>' + frame('M1 18h3V3h3v15h3V3h3v15h3V3h2'),
  w4: '<path d="M0 0h20v20H0z" fill="#181c90"/>' + frame('M0 18h8V2h12') + '<rect width="20" height="20" fill="url(#dither)"/>',
  w5: '<path d="M6 0h6v20H6z" fill="#181c90"/>' + frame('M0 18h6M12 2h7') + '<rect width="20" height="20" fill="url(#dither)"/><path d="M7 1v18" stroke="#f8f030" stroke-width="2" stroke-dasharray="3 1"/>',
  w6: '<path d="M1 18h9V2h8" fill="none" stroke="#189048" stroke-width="1.600" stroke-dasharray="2 1"/>',
  w7: '<path d="M1 18h9M11 2h7" stroke="#189048" stroke-width="1.600" stroke-dasharray="2 1"/><path d="M9.500 2v16" stroke="#f0e820" stroke-width="2"/>',
  fi: '<path d="M8 5h3v11M8 16h6" stroke="#555" stroke-dasharray="1 1" fill="none" stroke-width="1.500"/>',
  fo: '<circle cx="10" cy="10" r="5" fill="none" stroke="#555" stroke-width="1.5" stroke-dasharray="2 1"/>',
  fio: txt('I/O', 10, 12),
  fint: '<path d="M2 18V3h16v15M2 18h3M15 18h3M8 8h3v9" fill="none" stroke="#444" stroke-width="1.500" stroke-dasharray="2 1"/>',
  fall: txt('ALL', 10, 9),
  fopt: '<path d="M2 5l6-4 5 3-7 7z" fill="#e8c8e8"/><path d="M9 9l11-7v14z" fill="#b8dcc0"/><path d="M11 5l4-3 5 4-6 6z" fill="#a8a8b0"/><path d="M0 17l3-7 8-3 5 3-7 3-5 7z" fill="#7898f0"/>',
  bkadd: flag + '<circle cx="15" cy="15" r="4.500" fill="#4cae3c" stroke="#fff"/><path d="M15 12v6M12 15h6" stroke="#fff" stroke-width="1.600"/>',
  bkdel: flag + '<circle cx="15" cy="15" r="4.500" fill="#f06018" stroke="#fff"/><path d="M12 15h6" stroke="#fff" stroke-width="1.600"/>',
  bkedit: flag + '<path d="M8 19l2-4 7-8 3 3-8 8z" fill="#f0c050" stroke="#a87820"/>',
  bksave: flag + '<path d="M9 8h11v11H9z" fill="#5a90e0" stroke="#3860a8"/><path d="M11 9h7v4h-7zM12 15h5v4h-5z" fill="#fff"/>',
  bkgo: flag + '<path d="M8 12h6V8l6 6-6 6v-4H8z" fill="#48a838" stroke="#287020"/>',
  zin: lens('<path d="M5 8h6M8 5v6" stroke="#000" stroke-width="1.600"/>'),
  zout: lens('<path d="M5 8h6" stroke="#000" stroke-width="1.600"/>'),
  zfull: lens('<path d="M4 7q2-4 5-3" stroke="#9cf" fill="none" stroke-width="1.500"/>', '#104878'),
  zcur: '<path d="M7 1v12M1 13h13v5H1z" fill="#ffe060" stroke="#b07800" stroke-width="1.800"/><path d="M17 8l2 4" stroke="#1020d0" stroke-width="3"/><circle cx="15" cy="5" r="4" fill="#b0b8b8" stroke="#444"/>',
  zcurs: stand(1) + stand(11) + '<path d="M17 7l3 5" stroke="#1020d0" stroke-width="3"/><circle cx="14" cy="5" r="4" fill="#b0b8b8" stroke="#444"/>',
  zsel: '<path d="M1 1h12v5H7v7H1zM4 4h12v4M4 4v12h5" fill="none" stroke="#2030a0" stroke-width="1.300" stroke-dasharray="2 1"/><circle cx="13" cy="12" r="4" fill="#ddd" stroke="#777"/><path d="M15 15l5 4" stroke="#6070e0" stroke-width="2.500" stroke-dasharray="2 1"/>',
  link: '<path d="M2 2h9v8H2zM9 9h9v8H9z" fill="none" stroke="#005010" stroke-width="2.500"/><path d="M6 6v6h8V7" fill="none" stroke="#005010" stroke-width="2"/>',
  up: '<path d="M10 0l8 9h-5v11H7V9H2z" fill="url(#dark)"/>',
  back: '<path d="M0 10l9-7v4h11v6H9v4z" fill="url(#dark)"/>',
  fwd: '<path d="M20 10l-9-7v4H0v6h11v4z" fill="#444"/><rect width="20" height="20" fill="url(#dither)"/>',
  restart: page + '<path d="M17 3v16M13 2h7M14 7l3-4 3 4M14 11l3-4 3 4" stroke="#1018a0" stroke-width="1.500" fill="none"/>',
  run: page + '<path d="M17 1v16M14 14l3 4 3-4M14 19h6" stroke="#1018a0" stroke-width="1.500" fill="none"/>',
  cont: page + '<path d="M17 7v11M14 14l3 4 3-4" stroke="#1018a0" stroke-width="1.500" fill="none"/><path d="M17 1l3 3-3 3-3-3z" fill="#fff" stroke="#e83030"/>',
  runall: page + '<path d="M17 1v16M14 10l3 4 3-4M14 14l3 4 3-4" stroke="#1018a0" stroke-width="1.500" fill="none"/>',
  brk: page + '<path d="M17 12v6M14 15l3 3 3-3M14 19h6" stroke="#1018a0" fill="none" stroke-width="1.500"/>' + X,
  stop: '<path d="M6 1h8l4 4v10l-4 4H6l-4-4V5z" fill="#f03020"/><path d="M9 6H4v8h5M17 7h-5v6h5M6 10h4" stroke="#fff" stroke-width="1.500" fill="none"/><rect width="20" height="20" fill="url(#dither)" opacity=".6"/>',
  perf: '<path d="M1 8V3h7v4H3M11 3h5v4M5 12v6h14" fill="none" stroke="#333" stroke-width="3"/><path d="M12 4h4v14h-4z" fill="#f0e030"/><path d="M16 6h3v12h-3z" fill="#e83030"/><path d="M7 12h4v6H7z" fill="#20c030"/><rect width="20" height="20" fill="url(#dither)" opacity=".8"/>',
  mem: '<path d="M1 9V3h11v6M6 3v6M4 12v6h15V6" fill="none" stroke="#333" stroke-width="3"/><path d="M13 5h3v13h-3z" fill="#f0e030"/><path d="M16 6h3v12h-3z" fill="#e83030"/><path d="M8 14h4v4H8z" fill="#20c030"/><rect width="20" height="20" fill="url(#dither)" opacity=".8"/>',
  hand: '<path d="M6 19l-5-8 2-1 3 3V4l2-1 1 6V1h2l1 8 1-7 2 1v7l2-4 2 1-2 9-3 4z" fill="#fff" stroke="#222" stroke-width="1.400"/><path d="M8 17l4-5 4-2 2-2 2 3-4 3-4 6q-4 1-4-3z" fill="#a0c8f0" stroke="#99a"/>',
  cadd: '<path d="M8 1v13M2 14h13v4H2zM12 5h8M16 1v8" fill="#ffe000" stroke="#a88c00" stroke-width="2"/><path d="M2 19h14v-4" fill="none" stroke="#443800"/>',
  cdel: '<path d="M8 1v13M2 14h13v4H2zM8 5h11" fill="#ffe000" stroke="#a88c00" stroke-width="2"/><path d="M2 19h14v-4" fill="none" stroke="#443800"/>',
  e1: frame('M0 2h6v16h13') + va('M8 9l6-5v4h6v2h-6v4z'),
  e2: frame('M0 18h13V2h7') + va('M12 9L6 4v4H0v2h6v4z'),
  e3: frame('M0 2h6v16h13') + va('M3 6h6l-3 5zM7 13l4-4v3h6v2h-6v3z'),
  e4: frame('M0 2h11v16h8') + va('M8 6h6l-3 5zM10 13L6 9v3H1v2h5v3z'),
  e5: frame('M0 18h8V2h11') + va('M5 10h6L8 4zM9 13l4-4v3h5v2h-5v3z'),
  e6: frame('M0 18h13V2h6') + va('M10 9h6l-3-6zM12 13L8 9v3H3v2h5v3z'),
  wave: '<path d="M1 2h17v17H1z" fill="#000" stroke="#555"/><path d="M1 1h17v5H1z" fill="#eee"/><path d="M2 11h3V8h4v9h4V9h5" fill="none" stroke="#00d878" stroke-width="1.500"/><path d="M11 16h7" stroke="#3038b0" stroke-width="2"/>',
  objects: '<path d="M8 0l7 8H1z" fill="#b020d8"/><path d="M11 7h9v10h-9z" fill="#18a048" stroke="#107030"/><path d="M7 7l6 6-6 7-6-7z" fill="#1050e8"/><circle cx="12" cy="8" r="4" fill="#00e0f8"/>',
  play: '<circle cx="10" cy="11" r="8" fill="#e4eef8" stroke="#b0c4dc" stroke-dasharray="2 1"/><path d="M8 7l5 4-5 5z" fill="#6090c8"/>',
  down: '<path d="M8 3h4v11h3l-5 6-5-6h3z" fill="#68b858" stroke="#388030"/>',
  close: '<path d="M4 3l12 14M16 3L4 17" stroke="#000" stroke-width="3"/>',
  findsm: '<path d="M5 1h3v3h3V1h3l3 7v8h-6v-4H8v4H2V8z" fill="#3a4650"/><path d="M5 6h3M11 6h3M4 10v4M14 10v4" stroke="#9ab"/><path d="M14 16h6l-3 3z" fill="#000"/>'
};
const lock = '<path d="M6 10V5q4-5 8 0v2" fill="none" stroke="#aaa" stroke-width="2"/><path d="M4 9h13v9H4z" fill="#f8c040" stroke="#d89030"/><path d="M5 13h11M5 16h11" stroke="#ffe098"/>';
const minus = '<circle cx="43" cy="10" r="6.500" fill="#e85048" stroke="#f0a098"/><path d="M39 10h8" stroke="#fff" stroke-width="2"/>';
const wrench = '<path d="M21 16l9-8 1-5 5 1v4l-5 3-8 7z" fill="#78a0e0" stroke="#90a8c8"/><path d="M30 8l2-5 4 1v4l-4 2z" fill="#b8bcc4"/>';
const strips = {
  curicons: lock + wrench + minus,
  nowicons: '<path d="M1 14l4-9 3 9M4 11h4M8 5l4 9 3-10" fill="none" stroke="#777" stroke-width="1.500"/><path d="M1 16h12" stroke="#4878d0"/><path d="M15 4h14v12H15z" fill="#b8d4f0" stroke="#6898d0"/><path d="M15 4h14v3H15z" fill="#4888d8"/><path d="M22 10h8l-3 7z" fill="#a8b8c8"/><circle cx="38" cy="10" r="6.500" fill="#58b048" stroke="#90cc88"/><path d="M38 6v8M34 10h8" stroke="#fff" stroke-width="2"/>'
};
document.querySelectorAll('[data-icon]').forEach((el) => {
  const k = el.dataset.icon;
  const w = strips[k] ? 50 : 20;
  const size = el.classList.contains('close') ? 13 : 20;
  el.innerHTML = `<svg width="${strips[k] ? 50 : size}" height="${size}" viewBox="0 0 ${w} 20">${strips[k] || icons[k]}</svg>`;
});

/* Signal tree: [name, value, kind, expandable] */
const signals = [
  ['sim:/tb_ram/Group1', '', 'group'],
  ['tb_clk', '1'], ['tb_rst_n', '1'], ['address', '001010', '', 1], ['data', '01000000', '', 1],
  ['rden', '1'], ['wren', '0'], ['q', 'xxxxxxxx', '', 1], ['i', '10', '', 1],
  ['sim:/tb_ram/ram_ip...', '', 'group'],
  ['clk', 'St1', 'in'], ['rst_n', 'St1', 'in'], ['address', '10', 'in', 1], ['data', '64', 'in', 1],
  ['redn', '1', 'in'], ['wren', '0', 'in'], ['q', 'xxxxxxxx', 'out', 1], ['rden', '1', 'last']
];
const diamond = (kind) => {
  const c = kind === 'group' ? ['#ff7068', '#f02828', '#d01818', '#a80808'] : ['#a8e8fc', '#18b8f4', '#1890d0', '#085c90'];
  const arrow = { in: 'M0 12h4V9l5 4-5 5v-3H0z', out: 'M9 12h4V9l5 4-5 5v-3H9z' }[kind];
  return `<svg class="dia" viewBox="0 0 18 18"><path d="M9 0L0 9h9z" fill="${c[0]}"/><path d="M9 0l9 9H9z" fill="${c[2]}"/><path d="M0 9l9 9V9z" fill="${c[2]}"/><path d="M18 9l-9 9V9z" fill="${c[3]}"/><path d="M9 4l5 5-5 5-5-5z" fill="${c[1]}"/>${arrow ? `<path d="${arrow}" fill="#60e020" stroke="#287808"/>` : ''}</svg>`;
};
names.innerHTML = signals.map(([n, , k, e], i) => {
  const cls = [k === 'group' ? '' : 'child', k === 'last' ? 'last' : '', i === 14 ? 'sel' : ''].join(' ');
  const exp = k === 'group' ? 'exp' : e ? 'exp plus' : 'exp none';
  return `<li class="${cls}"><i class="${exp}"></i><i class="tw"></i>${diamond(k)}<span>${n}</span></li>`;
}).join('');
values.innerHTML = signals.map(([, v], i) => `<li class="${i === 14 ? 'sel' : ''}"><span>${v}</span></li>`).join('');

/* Waveforms, time in ns */
const X0 = 51, T0 = 2200, K = 0.709, LEFT = 4, END = 4160;
const tx = (t) => Math.round(X0 + (t - T0) * K) + 0.5;
const top_ = (n) => Math.round(25.3 + 21.25 * n) + 0.5;
const H = 15;
let out = '';
for (let t = 2200; t <= 4100; t += 100) out += `<path class="grid" d="M${tx(t)} 0v2000"/>`;
const path = (cls, d, extra = '') => { out += `<path class="${cls}" d="${d}" ${extra}/>`; };
const text = (s, x, y) => { out += `<text class="gt" x="${x}" y="${y}">${s}</text>`; };
const region = (n, s, w) => { out += `<rect x="6" y="${top_(n) - 20}" width="${w}" height="19" fill="#000"/>`; text(s, 9, top_(n) - 9); };
const clock = (n) => {
  const hi = top_(n), lo = hi + H;
  let d = `M${LEFT + 1} ${lo}`;
  for (let t = 2140; t < END; t += 20) d += `H${tx(t)}V${hi + 1}l1-1H${tx(t + 10) - 1}l1 1V${lo}`;
  path('g', d + `H${tx(END)}`);
};
const level = (n, edges) => {
  const hi = top_(n), lo = hi + H;
  let v = edges[0], d = `M${LEFT + 1} ${v ? hi : lo}`;
  edges.slice(1).forEach((t) => { v = !v; d += `H${tx(t)}V${v ? hi : lo}`; });
  path('g', d + `H${tx(END)}`);
};
const cells = (n, times) => {
  const hi = top_(n), lo = hi + H;
  for (let k = 0; k < times.length - 1; k++) {
    const open = times[k] === null, a = open ? LEFT : tx(times[k]), b = tx(times[k + 1]);
    const shut = times[k + 1] !== END || n === 7;
    path('g', open ? `M${a} ${hi}H${b - 2}l2 4v7l-2 4H${a}` : shut ? `M${a} ${hi + 4}l2-4H${b - 2}l2 4v7l-2 4H${a + 2}l-2-4z` : `M${b} ${hi}H${a + 2}l-2 4v7l2 4H${b}`);
  }
};
const every = (a, b) => { const r = []; for (let t = a; t <= b; t += 20) r.push(t); return r; };
const unknown = (n, a, b) => path('x', `M${a ? tx(a) : LEFT} ${top_(n) + 8}H${tx(b)}`);

region(0, '( Region: sim:/tb_ram )', 142);
region(9, '( Region: sim:/tb_ram/ram_ip_inst )', 216);
[0, 9].forEach((n) => {
  clock(n);
  level(n + 1, [true]);
  cells(n + 2, [null, ...every(2260, 3500), ...every(3720, END)]);
  cells(n + 3, [null, ...every(2240, 3500), END]);
  level(n + 4, n ? [false, 3720] : [false, 3720, END]);
  level(n + 5, [false, 2240, 3520]);
  unknown(n + 6, 0, 2260);
  cells(n + 6, every(2260, 3540));
  unknown(n + 6, 3540, END);
});
unknown(7, 0, 2240);
cells(7, [...every(2240, 3520), ...every(3720, END)]);
path('g', `M${LEFT + 1} ${top_(16)}H${tx(END)}`, 'stroke-dasharray="4 4"');
[[2, '000000', 9], [3, '00000000', 9], [2, '111111', tx(3507)], [3, '01000000', tx(3507)], [7, '64', tx(3527)],
 [11, '0', 9], [12, '0', 9], [11, '63', tx(3507)], [12, '64', tx(3507)]].forEach(([n, s, x]) => text(s, x, top_(n) + 13));
const cursors = (h1, h2) => `<rect class="cur" x="${tx(2240) - 0.5}" y="0" width="1" height="${h1}"/><rect class="cur" x="${tx(3720) - 2.5}" y="0" width="4" height="${h2}"/>`;
wplot.innerHTML = out + cursors(2000, 2000);
wtop.innerHTML = cursors(30, 30);

let r = '';
for (let t = 2120; t <= END; t += 40) r += `<path class="g" d="M${tx(t)} ${t % 200 ? 4 : 0}V9"/>`;
for (let t = 2400; t <= 4000; t += 400) r += `<text class="gt" x="${tx(t)}" y="24" text-anchor="middle">${t} ns</text>`;
r += '<path class="grid" d="M4 28.500H3000M4 49.500H3000"/>';
r += `<path d="M${tx(2240)} 39.500H${tx(3720)}" stroke="#a040b8"/><rect x="${tx(2998) - 24}" y="32" width="48" height="15"/><text x="${tx(2998)}" y="45" text-anchor="middle" fill="#b050c0">1480 ns</text>`;
r += cursors(28, 49);
[[2240, 29.5], [3720, 50.5]].forEach(([t, y]) => {
  r += `<rect x="${tx(t) - 27}" y="${y}" width="53" height="19" fill="#000" stroke="#f00"/><text class="rt" x="${tx(t)}" y="${y + 15}" text-anchor="middle">${t} ns</text>`;
});
wruler.innerHTML = r;
```
